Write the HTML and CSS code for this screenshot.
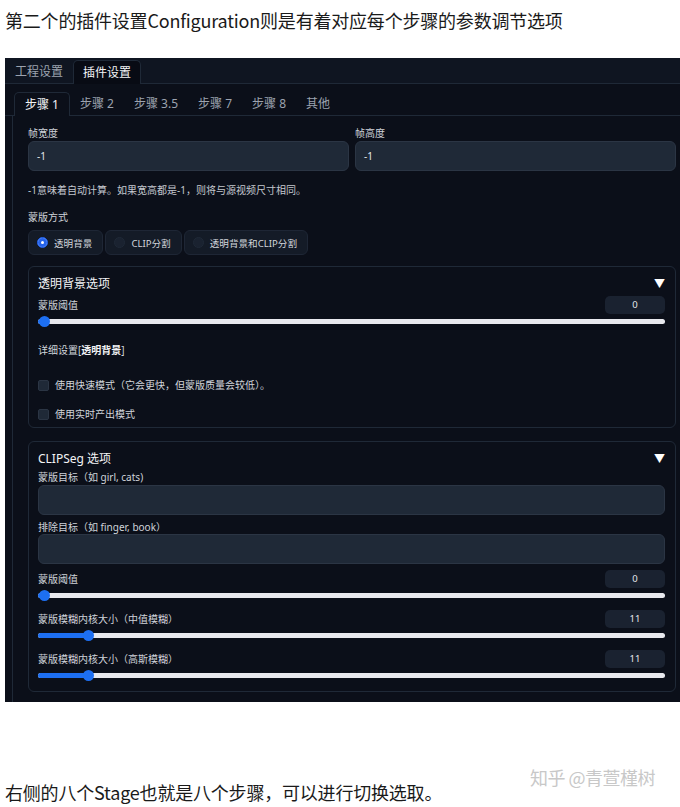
FILE: index.html
```html
<!DOCTYPE html>
<html lang="zh-CN">
<head>
    <meta charset="UTF-8">
    <meta name="viewport" content="width=device-width, initial-scale=1.0">
    <title>插件设置 Configuration</title>
    <link rel="stylesheet" href="styles.css">
</head>
<body>
    <div class="article">
        <p class="para">第二个的插件设置Configuration则是有着对应每个步骤的参数调节选项</p>

        <div class="panel">
            <div class="tabs top-tabs">
                <span class="tab">工程设置</span>
                <span class="tab active">插件设置</span>
            </div>
            <div class="tabs step-tabs">
                <span class="tab active">步骤 1</span>
                <span class="tab">步骤 2</span>
                <span class="tab">步骤 3.5</span>
                <span class="tab">步骤 7</span>
                <span class="tab">步骤 8</span>
                <span class="tab">其他</span>
            </div>

            <div class="tab-content">
                <div class="field-row">
                    <div class="field">
                        <label class="label">帧宽度</label>
                        <div class="textbox">-1</div>
                    </div>
                    <div class="field">
                        <label class="label">帧高度</label>
                        <div class="textbox">-1</div>
                    </div>
                </div>

                <p class="hint">-1意味着自动计算。如果宽高都是-1，则将与源视频尺寸相同。</p>

                <p class="label group-label">蒙版方式</p>
                <div class="radio-group">
                    <span class="radio checked"><i class="dot"></i>透明背景</span>
                    <span class="radio"><i class="dot"></i>CLIP分割</span>
                    <span class="radio"><i class="dot"></i>透明背景和CLIP分割</span>
                </div>

                <div class="accordion acc-bg">
                    <div class="acc-head">
                        <span>透明背景选项</span>
                        <span class="caret">▼</span>
                    </div>
                    <div class="num-row">
                        <span class="label">蒙版阈值</span>
                        <span class="num">0</span>
                    </div>
                    <div class="slider"><div class="fill" style="width: 0%"></div></div>

                    <p class="detail">详细设置[<b>透明背景</b>]</p>
                    <div class="check first"><i class="box"></i>使用快速模式（它会更快，但蒙版质量会较低）。</div>
                    <div class="check"><i class="box"></i>使用实时产出模式</div>
                </div>

                <div class="accordion acc-clip">
                    <div class="acc-head">
                        <span>CLIPSeg 选项</span>
                        <span class="caret">▼</span>
                    </div>
                    <label class="label target-label">蒙版目标（如 girl, cats)</label>
                    <div class="textbox"></div>
                    <label class="label target-label">排除目标（如 finger, book）</label>
                    <div class="textbox"></div>

                    <div class="num-row first-num">
                        <span class="label">蒙版阈值</span>
                        <span class="num">0</span>
                    </div>
                    <div class="slider"><div class="fill" style="width: 0%"></div></div>
                    <div class="num-row">
                        <span class="label">蒙版模糊内核大小（中值模糊）</span>
                        <span class="num">11</span>
                    </div>
                    <div class="slider"><div class="fill" style="width: 8%"></div></div>
                    <div class="num-row">
                        <span class="label">蒙版模糊内核大小（高斯模糊）</span>
                        <span class="num">11</span>
                    </div>
                    <div class="slider"><div class="fill" style="width: 8%"></div></div>
                </div>
            </div>
        </div>

        <span class="watermark">知乎 @青萱槿树</span>

        <p class="para bottom">右侧的八个Stage也就是八个步骤，可以进行切换选取。</p>
    </div>
</body>
</html>
```

FILE: styles.css
```css
* {
    margin: 0;
    padding: 0;
    box-sizing: border-box;
}

body {
    background: #ffffff;
    font-family: "Noto Sans CJK SC", "Noto Sans", sans-serif;
    overflow: hidden;
}

.article {
    position: relative;
    padding: 8px 0 0 5px;
}

.para {
    font-family: "Noto Sans CJK SC", sans-serif;
    font-size: 18px;
    line-height: 24px;
    color: #1a1a1a;
    letter-spacing: -0.2px;
}

.bottom {
    margin-top: 78px;
}

.watermark {
    position: absolute;
    top: 765px;
    left: 530px;
    font-size: 18px;
    line-height: 24px;
    color: #c8c8c8;
    letter-spacing: -0.5px;
}

/* Panel (dark UI) */
.panel {
    margin-top: 26px;
    width: 680px;
    height: 644px;
    background: #0b0f19;
    font-family: "Noto Sans", "Noto Sans CJK SC", sans-serif;
    color: #d1d5db;
    overflow: hidden;
}

.tabs {
    display: flex;
    align-items: flex-end;
    border-bottom: 1px solid #1f2937;
}

.top-tabs {
    height: 26px;
    background: #0f1521;
}

.step-tabs {
    height: 32px;
    padding-left: 9px;
}

.tab {
    height: 23px;
    line-height: 23px;
    font-size: 12px;
    color: #9ca3af;
    padding: 0 10px;
    white-space: nowrap;
}

.tab.active {
    color: #f3f4f6;
    background: #0b0f19;
    border: 1px solid #1f2937;
    border-bottom: none;
    border-radius: 5px 5px 0 0;
    margin-bottom: -1px;
    height: 24px;
}

.top-tabs .tab.active {
    padding: 0 9px;
    background: #080b14;
}

.tab-content {
    margin-left: 7px;
    border-left: 1px solid #1f2937;
    padding: 10px 9px 0 15px;
    height: 600px;
}

.label {
    display: block;
    font-size: 10px;
    line-height: 14px;
    color: #cfd3da;
}

.field-row {
    display: flex;
    gap: 6px;
}

.field {
    flex: 1;
}

.field .label {
    margin-bottom: 1px;
}

.textbox {
    height: 30px;
    background: #1f2937;
    border: 1px solid #2b3544;
    border-radius: 6px;
    font-size: 10px;
    line-height: 28px;
    padding: 0 8px;
    color: #e5e7eb;
}

.hint {
    margin-top: 12px;
    font-size: 10px;
    line-height: 14px;
    color: #c4c8cf;
}

.group-label {
    margin-top: 13px;
}

.radio-group {
    display: flex;
    gap: 2px;
    margin-top: 6px;
    height: 25px;
}

.radio {
    display: flex;
    align-items: center;
    gap: 6px;
    padding: 0 10px 0 8px;
    background: #141b27;
    border: 1px solid #1e2635;
    border-radius: 6px;
    font-size: 9.6px;
    color: #d1d5db;
}

.dot {
    width: 11px;
    height: 11px;
    border-radius: 50%;
    background: #1a2230;
    border: 1px solid #1f2937;
}

.radio.checked .dot {
    background: #2563eb;
    border-color: #2563eb;
    box-shadow: inset 0 0 0 3px #2563eb, inset 0 0 0 6px #ffffff;
}

.accordion {
    border: 1px solid #1f2937;
    border-radius: 6px;
    padding: 8px 10px 0 9px;
}

.acc-bg {
    margin-top: 11px;
    height: 162px;
}

.acc-clip {
    margin-top: 13px;
    height: 251px;
}

.acc-head {
    display: flex;
    justify-content: space-between;
    align-items: center;
    height: 15px;
    font-size: 12px;
    color: #f3f4f6;
}

.caret {
    font-size: 11px;
    color: #ffffff;
}

.num-row {
    display: flex;
    justify-content: space-between;
    align-items: center;
    height: 18px;
    margin-top: 6px;
}

.num {
    width: 60px;
    height: 18px;
    line-height: 18px;
    text-align: center;
    font-size: 9.5px;
    color: #e5e7eb;
    background: #1a2230;
    border-radius: 5px;
}

.slider {
    margin-top: 5px;
    height: 5px;
    background: #e8e9ee;
    border-radius: 3px;
    position: relative;
}

.fill {
    height: 5px;
    background: #1d6ff2;
    border-radius: 3px;
    position: relative;
    min-width: 6px;
}

.fill::after {
    content: "";
    position: absolute;
    right: -6px;
    top: -3px;
    width: 11px;
    height: 11px;
    border-radius: 50%;
    background: #1d6ff2;
}

.acc-clip .num-row {
    margin-top: 12px;
}

.acc-clip .first-num {
    margin-top: 6px;
}

.detail {
    margin-top: 19px;
    font-size: 10px;
    line-height: 14px;
    color: #d1d5db;
}

.detail b {
    color: #f3f4f6;
}

.check {
    display: flex;
    align-items: center;
    gap: 6px;
    font-size: 10px;
    line-height: 14px;
    margin-top: 15px;
}

.check.first {
    margin-top: 21px;
}

.box {
    width: 11px;
    height: 11px;
    background: #1f2937;
    border: 1px solid #2b3544;
    border-radius: 2px;
}

.target-label {
    margin-top: 5px;
}

.acc-head + .target-label {
    margin-bottom: 1px;
}
```
